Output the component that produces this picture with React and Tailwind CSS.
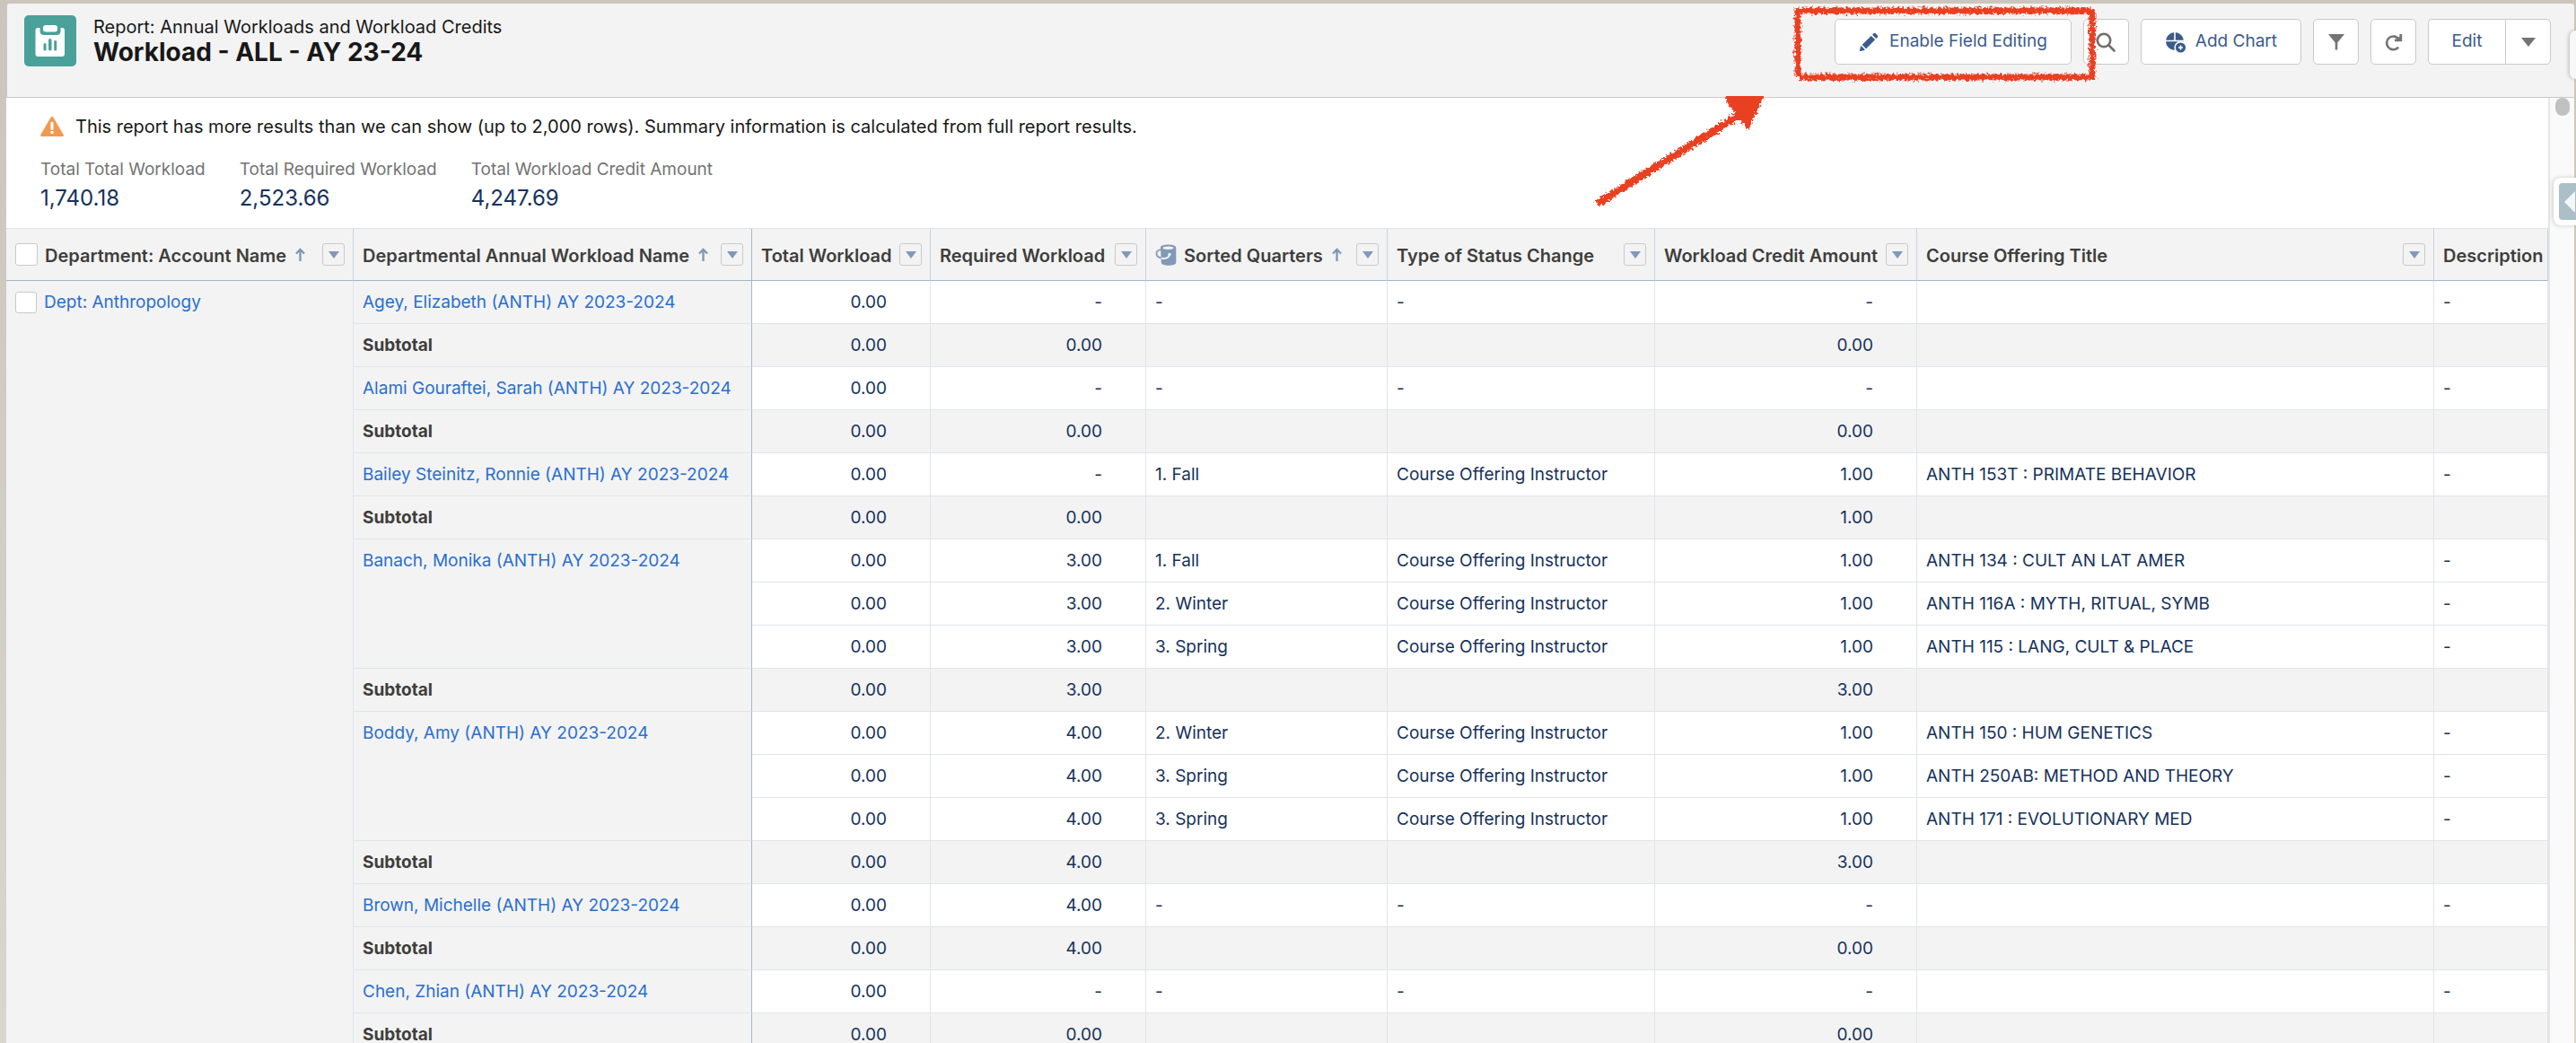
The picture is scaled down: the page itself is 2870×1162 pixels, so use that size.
import { useState } from 'react'

const PEOPLE = [
  { name: 'Agey, Elizabeth (ANTH) AY 2023-2024', rows: [['-', '-', '-', '-', '']], subtotal: ['0.00', '0.00'] },
  { name: 'Alami Gouraftei, Sarah (ANTH) AY 2023-2024', rows: [['-', '-', '-', '-', '']], subtotal: ['0.00', '0.00'] },
  {
    name: 'Bailey Steinitz, Ronnie (ANTH) AY 2023-2024',
    rows: [['-', '1. Fall', 'Course Offering Instructor', '1.00', 'ANTH 153T : PRIMATE BEHAVIOR']],
    subtotal: ['0.00', '1.00'],
  },
  {
    name: 'Banach, Monika (ANTH) AY 2023-2024',
    rows: [
      ['3.00', '1. Fall', 'Course Offering Instructor', '1.00', 'ANTH 134 : CULT AN LAT AMER'],
      ['3.00', '2. Winter', 'Course Offering Instructor', '1.00', 'ANTH 116A : MYTH, RITUAL, SYMB'],
      ['3.00', '3. Spring', 'Course Offering Instructor', '1.00', 'ANTH 115 : LANG, CULT & PLACE'],
    ],
    subtotal: ['3.00', '3.00'],
  },
  {
    name: 'Boddy, Amy (ANTH) AY 2023-2024',
    rows: [
      ['4.00', '2. Winter', 'Course Offering Instructor', '1.00', 'ANTH 150 : HUM GENETICS'],
      ['4.00', '3. Spring', 'Course Offering Instructor', '1.00', 'ANTH 250AB: METHOD AND THEORY'],
      ['4.00', '3. Spring', 'Course Offering Instructor', '1.00', 'ANTH 171 : EVOLUTIONARY MED'],
    ],
    subtotal: ['4.00', '3.00'],
  },
  { name: 'Brown, Michelle (ANTH) AY 2023-2024', rows: [['4.00', '-', '-', '-', '']], subtotal: ['4.00', '0.00'] },
  { name: 'Chen, Zhian (ANTH) AY 2023-2024', rows: [['-', '-', '-', '-', '']], subtotal: ['0.00', '0.00'] },
]

const TOTALS = [
  ['Total Total Workload', '1,740.18'],
  ['Total Required Workload', '2,523.66'],
  ['Total Workload Credit Amount', '4,247.69'],
]

const COLUMNS = [
  { label: 'Department: Account Name', width: 'w-[387px]', sorted: true, menu: true, select: true },
  { label: 'Departmental Annual Workload Name', width: 'w-[444px]', sorted: true, menu: true, frozenEdge: true },
  { label: 'Total Workload', width: 'w-[199px]', menu: true },
  { label: 'Required Workload', width: 'w-[240px]', menu: true },
  { label: 'Sorted Quarters', width: 'w-[269px]', sorted: true, menu: true, bucket: true },
  { label: 'Type of Status Change', width: 'w-[298px]', menu: true },
  { label: 'Workload Credit Amount', width: 'w-[292px]', menu: true },
  { label: 'Course Offering Title', width: 'w-[576px]', menu: true },
  { label: 'Description' },
]

const BUTTON = 'flex h-[51px] items-center justify-center border border-[#c9c9c9] bg-white text-[19px] text-[#3b5b8c]'

function ReportIcon() {
  return (
    <svg viewBox="0 0 58 57" className="h-[57px] w-[58px] shrink-0">
      <rect width="58" height="57" rx="5" fill="#4aa199" />
      <path
        d="M15.500 14H17.500V17.500Q17.500 22 22 22H36Q40.500 22 40.500 17.500V14H42Q45 14 45 17V43Q45 46 42 46H15.500Q12.500 46 12.500 43V17Q12.500 14 15.500 14Z"
        fill="#fff"
      />
      <rect x="21" y="11" width="16" height="7.500" rx="3" fill="#fff" />
      <g fill="#4aa199">
        <rect x="21.500" y="31" width="3" height="8.500" rx="1.500" />
        <rect x="27" y="26" width="3.500" height="13.500" rx="1.700" />
        <rect x="33.200" y="28" width="3" height="11.500" rx="1.500" />
      </g>
    </svg>
  )
}

function PencilIcon() {
  return (
    <svg viewBox="0 0 52 52" className="size-[22px]" fill="currentColor">
      <path d="M9.500 33.400l8.900 8.900c.4.4 1 .4 1.400 0L42 20c.4-.4.4-1 0-1.400l-8.800-8.800c-.4-.4-1-.4-1.400 0L9.500 32.100c-.4.4-.4 1 0 1.300zM36.100 5.700c-.4.4-.4 1 0 1.400l8.800 8.800c.4.4 1 .4 1.400 0l2.500-2.500c1.600-1.500 1.600-3.900 0-5.500l-4.700-4.700c-1.600-1.600-4.100-1.600-5.700 0l-2.300 2.500zM2.100 48.200c-.2 1 .7 1.900 1.700 1.700l10.900-2.600c.4-.1.7-.3.9-.5l.2-.2c.2-.2.3-.9-.1-1.300l-9-9c-.4-.4-1.100-.3-1.300-.1l-.2.2c-.3.3-.4.6-.5.9L2.100 48.200z" />
    </svg>
  )
}

function AddChartIcon() {
  return (
    <svg viewBox="0 0 24 24" className="size-6">
      <circle cx="11" cy="11" r="10" fill="#3b5b8c" />
      <path d="M11 0V10.500M0 10.500H22" stroke="#fff" strokeWidth="1.600" />
      <circle cx="17.500" cy="18" r="7.200" fill="#fff" />
      <circle cx="17.500" cy="18" r="5.600" fill="#3b5b8c" />
      <path d="M17.500 15.500V20.500M15 18H20" stroke="#fff" strokeWidth="1.600" />
    </svg>
  )
}

function SearchIcon() {
  return (
    <svg viewBox="0 0 24 24" className="size-6" fill="none" stroke="#706e6b" strokeWidth="2.600" strokeLinecap="round">
      <circle cx="10" cy="10" r="7.200" />
      <path d="M15.500 15.500L21.500 21.500" />
    </svg>
  )
}

function FilterIcon() {
  return (
    <svg viewBox="0 0 18 18" className="size-[18px]" fill="#747474">
      <path d="M0 0H18L10.300 9.600V17.500H7.700V9.600Z" />
    </svg>
  )
}

function RefreshIcon() {
  return (
    <svg viewBox="0 0 20 20" className="size-5" fill="none" stroke="#747474">
      <path d="M14.500 16.300A7.400 7.400 0 1 1 15.800 7" strokeWidth="2.600" strokeLinecap="round" />
      <path d="M17.800 1V7.800H11" strokeWidth="2.800" />
      <path d="M13.500 5L17 4V8H13Z" fill="#747474" stroke="none" />
    </svg>
  )
}

function BucketIcon() {
  return (
    <svg viewBox="0 0 24 24" className="size-6 shrink-0">
      <path
        d="M6 3.500C6 1.500 10 .5 14.500 .5S23.300 1.600 23.300 4V20.500C23.300 22.800 19 23.700 15 23.700S6.800 22.800 6.800 20.500Z"
        fill="#8199b8"
      />
      <ellipse cx="14.500" cy="4.300" rx="6" ry="1.700" fill="#f3f3f3" />
      <path d="M7 15.700C11.500 16.500 15 15 16 12" fill="none" stroke="#f3f3f3" strokeWidth="2" strokeLinecap="round" />
      <circle cx="16" cy="11.500" r="1.700" fill="#f3f3f3" />
      <path d="M7 6.200C3 6.200 1.200 8.500 1.500 11C1.900 13.500 4 15 7 15.500" fill="none" stroke="#8199b8" strokeWidth="1.700" />
    </svg>
  )
}

function SortArrow() {
  return (
    <svg viewBox="0 0 11 15" className="ml-[2px] h-[15px] w-[11px] shrink-0" fill="none" stroke="#7f99b8" strokeWidth="2.400">
      <path d="M5.500 15V2M1 6.500L5.500 2L10 6.500" />
    </svg>
  )
}

function HeaderCell({ column, checked, onToggle }) {
  return (
    <th
      className={`h-[58px] border-r border-b border-b-[#a5b5c5] bg-[#f3f3f3] p-0 text-left font-semibold text-[#3e3e3c] ${
        column.frozenEdge ? 'border-r-[#a8b4c5]' : 'border-r-[#c8d3e0]'
      }`}
    >
      <div className="flex items-center gap-2 pr-[9px] pl-[10px] text-[20px] whitespace-nowrap">
        {column.select && (
          <input
            type="checkbox"
            aria-label="Select all"
            checked={checked}
            onChange={onToggle}
            className="size-[25px] shrink-0 appearance-none rounded-[3px] border border-[#c9c9c9] bg-white checked:bg-blue-600"
          />
        )}
        {column.bucket && <BucketIcon />}
        <span className="pt-[2px]">{column.label}</span>
        {column.sorted && <SortArrow />}
        {column.menu && (
          <button
            type="button"
            aria-label={`${column.label} menu`}
            className="ml-auto flex size-[25px] shrink-0 items-center justify-center rounded-[3px] border border-[#c9c9c9]"
          >
            <svg viewBox="0 0 12 8" className="h-2 w-3" fill="#7f99b8"><path d="M0 0H12L6 8Z" /></svg>
          </button>
        )}
      </div>
    </th>
  )
}

function Cell({ children, number, subtotal }) {
  return (
    <td
      className={`h-12 border-r border-b border-[#e1e4ee] pt-[2px] pb-0 text-[19px] whitespace-nowrap text-[#16325c] ${
        number ? 'pr-12 text-right' : 'pl-[10px]'
      } ${subtotal ? 'bg-[#f3f3f3]' : 'bg-white'}`}
    >
      {children}
    </td>
  )
}

// Hand-drawn red box and arrow pointing at the field editing button
function Callout() {
  return (
    <svg viewBox="0 0 570 240" className="pointer-events-none absolute top-0 right-[526px] h-[240px] w-[570px]">
      <defs>
        <filter id="crayon" x="-5%" y="-5%" width="110%" height="110%">
          <feTurbulence type="fractalNoise" baseFrequency="0.35" numOctaves="2" seed="4" result="noise" />
          <feDisplacementMap in="SourceGraphic" in2="noise" scale="8" xChannelSelector="R" yChannelSelector="G" />
        </filter>
        <clipPath id="below-header">
          <rect x="0" y="107" width="570" height="133" />
        </clipPath>
      </defs>
      <g filter="url(#crayon)" fill="none" stroke="#ea4024">
        <path d="M229 12H557M557 10V89M231 86H557M229 9V85" strokeWidth="7" />
      </g>
      <g clipPath="url(#below-header)">
        <g filter="url(#crayon)">
          <path d="M5 227L164 128" stroke="#ea4024" strokeWidth="8" />
          <path d="M150 100L149 112L173 146L192 107V100Z" fill="#ea4024" />
        </g>
      </g>
    </svg>
  )
}

export default function App() {
  const [allChecked, setAllChecked] = useState(false)
  const [deptChecked, setDeptChecked] = useState(false)

  const rowCount = PEOPLE.reduce((n, p) => n + p.rows.length + 1, 0)

  return (
    <div className="relative h-screen overflow-hidden bg-linear-to-b from-[#cbc5bb] to-[#dad6cb] pt-1 pr-[2px] pl-[7px] font-['Inter',sans-serif] text-[#181818]">
      <div className="flex h-full flex-col">
        <header className="flex items-start justify-between rounded-t-[3px] border-b border-l border-[#c9c9c9] bg-[#f3f3f3] pt-[13px] pr-[26px] pb-[34px] pl-[19px]">
          <div className="flex gap-[19px]">
            <ReportIcon />
            <div>
              <p className="text-[20px] leading-[26px]">Report: Annual Workloads and Workload Credits</p>
              <h1 className="text-[28px] leading-[30px] font-bold">Workload - ALL - AY 23-24</h1>
            </div>
          </div>
          <div className="flex gap-[13px] pt-1">
            <button type="button" className={`${BUTTON} gap-3 rounded-[5px] px-[26px]`}>
              <PencilIcon />
              Enable Field Editing
            </button>
            <button type="button" aria-label="Search" className={`${BUTTON} w-[51px] rounded-[5px]`}><SearchIcon /></button>
            <button type="button" className={`${BUTTON} gap-[10px] rounded-[5px] px-[26px]`}>
              <AddChartIcon />
              Add Chart
            </button>
            <button type="button" aria-label="Filter" className={`${BUTTON} w-[51px] rounded-[5px]`}><FilterIcon /></button>
            <button type="button" aria-label="Refresh" className={`${BUTTON} w-[51px] rounded-[5px]`}><RefreshIcon /></button>
            <div className="flex">
              <button type="button" className={`${BUTTON} w-[86px] rounded-l-[5px] border-r-0`}>Edit</button>
              <button type="button" aria-label="More actions" className={`${BUTTON} w-[51px] rounded-r-[5px]`}>
                <svg viewBox="0 0 16 10" className="h-[10px] w-4" fill="#747474"><path d="M0 0H16L8 10Z" /></svg>
              </button>
            </div>
          </div>
        </header>

        <div className="flex min-h-0 flex-1">
          <main className="min-w-0 flex-1 overflow-hidden bg-white">
            <section className="px-[38px] pt-5 pb-[17px]">
              <div className="flex items-center gap-[13px]">
                <svg viewBox="0 0 26 22" className="h-[22px] w-[26px]">
                  <path d="M11.600 .8Q13 -.6 14.400 .8L25.700 20Q26.400 22 24.500 22H1.500Q-.4 22 .3 20Z" fill="#f39850" />
                  <path d="M13 7V13.500" stroke="#fff" strokeWidth="3" strokeLinecap="round" />
                  <circle cx="13" cy="17.500" r="1.700" fill="#fff" />
                </svg>
                <p className="text-[20px] leading-6">
                  This report has more results than we can show (up to 2,000 rows). Summary information is calculated from full report results.
                </p>
              </div>
              <dl className="mt-6 flex gap-[38px]">
                {TOTALS.map(([label, value]) => (
                  <div key={label}>
                    <dt className="text-[19px] leading-6 text-[#747474]">{label}</dt>
                    <dd className="mt-1 text-[24px] leading-8 text-[#16325c]">{value}</dd>
                  </div>
                ))}
              </dl>
            </section>

            <table className="w-full table-fixed border-separate border-spacing-0 border-t border-[#dde4ec]">
              <colgroup>
                {COLUMNS.map((c) => <col key={c.label} className={c.width} />)}
              </colgroup>
              <thead>
                <tr>
                  {COLUMNS.map((c) => (
                    <HeaderCell key={c.label} column={c} checked={allChecked} onToggle={() => setAllChecked(!allChecked)} />
                  ))}
                </tr>
              </thead>
              <tbody>
                {PEOPLE.map((person, p) => [
                  ...person.rows.map(([required, quarter, status, credit, title], r) => (
                    <tr key={`${person.name}-${r}`}>
                      {p === 0 && r === 0 && (
                        <td rowSpan={rowCount} className="border-r border-[#e1e4ee] bg-[#f3f3f3] px-[10px] pt-3 align-top text-[19px] leading-6">
                          <div className="flex items-center gap-2">
                            <input
                              type="checkbox"
                              aria-label="Select Dept: Anthropology"
                              checked={deptChecked}
                              onChange={() => setDeptChecked(!deptChecked)}
                              className="size-6 appearance-none rounded-[3px] border border-[#c9c9c9] bg-white checked:bg-blue-600"
                            />
                            <a href="#anthropology" className="text-[#2a6fce]">Dept: Anthropology</a>
                          </div>
                        </td>
                      )}
                      {r === 0 && (
                        <td
                          rowSpan={person.rows.length}
                          className="border-r border-b border-r-[#a8b4c5] border-b-[#e1e4ee] bg-[#f3f3f3] pt-3 pl-[10px] align-top text-[19px] leading-6 whitespace-nowrap"
                        >
                          <a href={`#person-${p}`} className="text-[#2a6fce]">{person.name}</a>
                        </td>
                      )}
                      <Cell number>0.00</Cell>
                      <Cell number>{required}</Cell>
                      <Cell>{quarter}</Cell>
                      <Cell>{status}</Cell>
                      <Cell number>{credit}</Cell>
                      <Cell>{title}</Cell>
                      <Cell>-</Cell>
                    </tr>
                  )),
                  <tr key={`${person.name}-subtotal`}>
                    <th
                      scope="row"
                      className="h-12 border-r border-b border-r-[#a8b4c5] border-b-[#e1e4ee] bg-[#f3f3f3] pt-[2px] pb-0 pl-[10px] text-left text-[19px] font-bold text-[#3e3e3c]"
                    >
                      Subtotal
                    </th>
                    <Cell number subtotal>0.00</Cell>
                    <Cell number subtotal>{person.subtotal[0]}</Cell>
                    <Cell subtotal />
                    <Cell subtotal />
                    <Cell number subtotal>{person.subtotal[1]}</Cell>
                    <Cell subtotal />
                    <Cell subtotal />
                  </tr>,
                ])}
              </tbody>
            </table>
          </main>

          {/* Scroll track */}
          <div className="flex w-[29px] justify-center border-l-2 border-[#e5e5e5] bg-[#fafafa]">
            <div className="h-5 w-4 rounded-full bg-[#c1c1c1]" />
          </div>
        </div>
      </div>

      <Callout />

      {/* Side panel handles */}
      <div className="absolute top-[34px] right-0 h-[54px] w-[7px] rounded-l-lg bg-[#f7f7f8] shadow-[-1px_0_4px_rgba(0,0,0,0.25)]" />
      <button
        type="button"
        aria-label="Open side panel"
        className="absolute top-[198px] right-0 h-[53px] w-[25px] rounded-l-lg bg-white py-[6px] pl-[6px] shadow-[-1px_0_5px_rgba(0,0,0,0.2)]"
      >
        <span className="flex h-full items-center justify-end rounded-l-sm bg-[#abbfc9]">
          <svg viewBox="0 0 13 24" className="h-6 w-[13px]" fill="#f4f6f7"><path d="M12 0V24L0 12Z" /></svg>
        </span>
      </button>
    </div>
  )
}
